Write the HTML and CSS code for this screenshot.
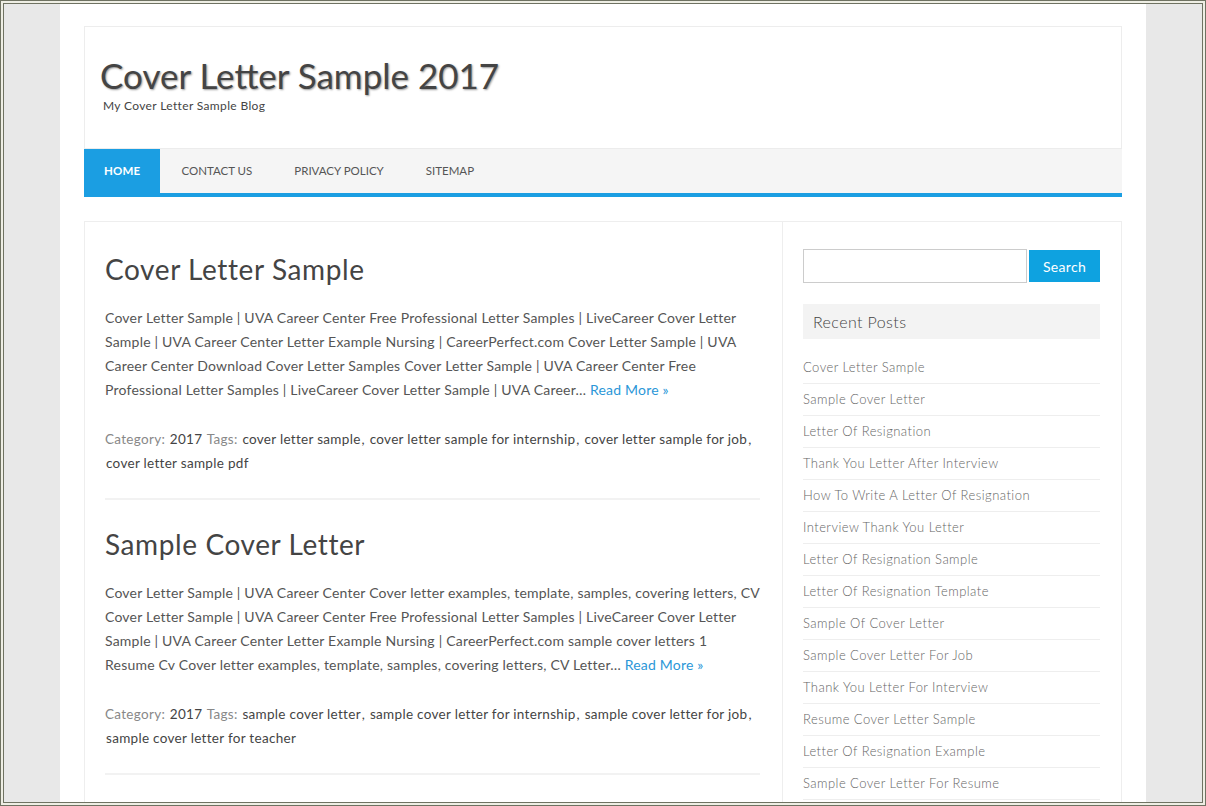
FILE: index.html
```html
<!DOCTYPE html>
<html>
<head>
  <title>Cover Letter Sample 2017</title>
  <link rel="stylesheet" href="styles.css">
</head>
<body>
  <div class="frame">
    <div class="screen">
      <div class="site">
        <div class="site-header">
          <div class="branding">
            <h1 class="site-title">Cover Letter Sample 2017</h1>
            <p class="site-desc">My Cover Letter Sample Blog</p>
          </div>
          <ul class="nav">
            <li class="current">Home</li>
            <li>Contact Us</li>
            <li>Privacy Policy</li>
            <li>Sitemap</li>
          </ul>
        </div>

        <div class="content">
          <div class="main">
            <div class="post">
              <h2>Cover Letter Sample</h2>
              <p>Cover Letter Sample | UVA Career Center Free Professional Letter Samples | LiveCareer Cover Letter Sample | UVA Career Center Letter Example Nursing | CareerPerfect.com Cover Letter Sample | UVA Career Center Download Cover Letter Samples Cover Letter Sample | UVA Career Center Free Professional Letter Samples | LiveCareer Cover Letter Sample | UVA Career&hellip; <a href="#">Read More &raquo;</a></p>
              <div class="meta">
                <span class="label">Category:</span> <span class="tag">2017</span> <span class="label">Tags:</span>
                <span class="tag">cover letter sample</span>, <span class="tag">cover letter sample for internship</span>, <span class="tag">cover letter sample for job</span>, <span class="tag">cover letter sample pdf</span>
              </div>
            </div>

            <div class="post">
              <h2>Sample Cover Letter</h2>
              <p>Cover Letter Sample | UVA Career Center Cover letter examples, template, samples, covering letters, CV Cover Letter Sample | UVA Career Center Free Professional Letter Samples | LiveCareer Cover Letter Sample | UVA Career Center Letter Example Nursing | CareerPerfect.com sample cover letters 1 Resume Cv Cover letter examples, template, samples, covering letters, CV Letter&hellip; <a href="#">Read More &raquo;</a></p>
              <div class="meta">
                <span class="label">Category:</span> <span class="tag">2017</span> <span class="label">Tags:</span>
                <span class="tag">sample cover letter</span>, <span class="tag">sample cover letter for internship</span>, <span class="tag">sample cover letter for job</span>, <span class="tag">sample cover letter for teacher</span>
              </div>
            </div>
          </div>

          <div class="sidebar">
            <div class="search">
              <input type="text">
              <button>Search</button>
            </div>
            <h3 class="widget-title">Recent Posts</h3>
            <ul class="recent">
              <li>Cover Letter Sample</li>
              <li>Sample Cover Letter</li>
              <li>Letter Of Resignation</li>
              <li>Thank You Letter After Interview</li>
              <li>How To Write A Letter Of Resignation</li>
              <li>Interview Thank You Letter</li>
              <li>Letter Of Resignation Sample</li>
              <li>Letter Of Resignation Template</li>
              <li>Sample Of Cover Letter</li>
              <li>Sample Cover Letter For Job</li>
              <li>Thank You Letter For Interview</li>
              <li>Resume Cover Letter Sample</li>
              <li>Letter Of Resignation Example</li>
              <li>Sample Cover Letter For Resume</li>
              <li>Letter Of Interest</li>
            </ul>
          </div>
        </div>
      </div>
    </div>
  </div>
</body>
</html>
```

FILE: styles.css
```css
html, body {
  margin: 0;
  padding: 0;
  height: 100%;
  overflow: hidden;
}

body {
  font-family: Lato, "Open Sans", sans-serif;
  color: #555;
}

.frame {
  height: 806px;
  box-sizing: border-box;
  border: 1px solid #6f7262;
  padding: 2px;
  background-color: #eeeee4;
}

.screen {
  height: 100%;
  box-sizing: border-box;
  border: 1px solid #6f7262;
  background-color: #e8e8e8;
  overflow: hidden;
}

.site {
  width: 1086px;
  height: 100%;
  margin: 0 auto;
  padding: 22px 24px 0;
  box-sizing: border-box;
  background-color: #fff;
}

/* header */
.site-header {
  border: 1px solid #ededed;
  border-bottom: none;
}

.branding {
  height: 121px;
  padding: 26px 0 0 15px;
  box-sizing: border-box;
}

.site-title {
  margin: 0;
  font-size: 35px;
  font-weight: 400;
  line-height: 44px;
  color: #444;
  text-shadow: 1px 1px 2px #999;
}

.site-desc {
  margin: 1px 0 0 3px;
  font-size: 12px;
  letter-spacing: 0.35px;
  color: #444;
}

.nav {
  display: flex;
  margin: 0 -1px;
  padding: 0;
  list-style: none;
  background-color: #f5f5f5;
  border-top: 1px solid #ececec;
  border-bottom: 4px solid #1b9ee2;
}

.nav li {
  padding: 0 21px;
  line-height: 44px;
  font-size: 11.5px;
  text-transform: uppercase;
  color: #555;
}

.nav li.current {
  padding: 0 20px;
  background-color: #1b9ee2;
  color: #fff;
  font-weight: bold;
  letter-spacing: 0.2px;
}

/* content */
.content {
  display: flex;
  margin-top: 24px;
  border: 1px solid #eee;
}

.main {
  width: 698px;
  padding: 30px 22px 0 20px;
  box-sizing: border-box;
  border-right: 1px solid #eee;
}

.post {
  padding-bottom: 23px;
  border-bottom: 2px solid #f2f2f2;
  margin-bottom: 27px;
}

.post h2 {
  margin: 0 0 20px;
  font-size: 28px;
  font-weight: 400;
  line-height: 34px;
  letter-spacing: 0.6px;
  color: #444;
}

.post p {
  margin: 0 0 25px;
  font-size: 14px;
  line-height: 24px;
  letter-spacing: 0.21px;
  color: #555;
}

.post a {
  color: #2b97d8;
  text-decoration: none;
}

.meta {
  font-size: 13.5px;
  line-height: 24px;
  letter-spacing: 0.3px;
  color: #444;
}

.meta .label {
  color: #888;
}

.meta .tag {
  padding: 0 1px;
}

.sidebar {
  flex: 1;
  padding: 27px 21px 0 20px;
}

.search {
  display: flex;
  align-items: center;
  gap: 2px;
}

.search input {
  width: 224px;
  height: 34px;
  box-sizing: border-box;
  border: 1px solid #ccc;
  margin: 0;
}

.search button {
  width: 71px;
  height: 32px;
  border: none;
  background-color: #0ea2e0;
  color: #fff;
  font-family: Lato, sans-serif;
  font-size: 14px;
  letter-spacing: 0.3px;
  padding: 0;
}

.widget-title {
  margin: 21px 0 13px;
  padding: 0 10px;
  height: 35px;
  line-height: 35px;
  background-color: #f3f3f3;
  font-size: 16px;
  font-weight: 300;
  letter-spacing: 0.4px;
  color: #444;
}

.recent {
  margin: 0;
  padding: 0;
  list-style: none;
}

.recent li {
  padding: 8px 0;
  line-height: 15px;
  font-size: 13px;
  font-weight: 300;
  letter-spacing: 0.45px;
  color: #666;
  border-bottom: 1px solid #eee;
}
```
